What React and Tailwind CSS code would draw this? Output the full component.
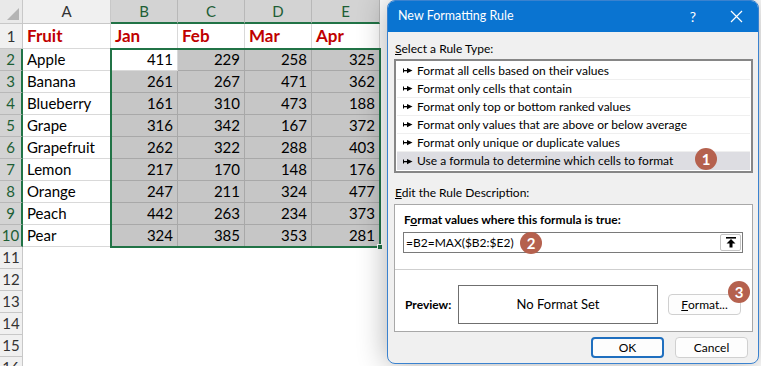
import React from 'react';

const rows = [
    ['Apple', 411, 229, 258, 325],
    ['Banana', 261, 267, 471, 362],
    ['Blueberry', 161, 310, 473, 188],
    ['Grape', 316, 342, 167, 372],
    ['Grapefruit', 262, 322, 288, 403],
    ['Lemon', 217, 170, 148, 176],
    ['Orange', 247, 211, 324, 477],
    ['Peach', 442, 263, 234, 373],
    ['Pear', 324, 385, 353, 281],
];

const ruleTypes = [
    'Format all cells based on their values',
    'Format only cells that contain',
    'Format only top or bottom ranked values',
    'Format only values that are above or below average',
    'Format only unique or duplicate values',
    'Use a formula to determine which cells to format',
];

const sheetFont = { fontFamily: 'Lato, "Liberation Sans", sans-serif' };
const dlgFont = { fontFamily: 'Lato, "Noto Sans", sans-serif' };

// little arrow used in front of each rule type
const RuleArrow = () => (
    <svg width="10" height="9" viewBox="0 0 10 9" className="shrink-0">
        <rect x="0" y="2.5" width="1" height="4" fill="#000" />
        <rect x="0" y="4" width="5" height="1.3" fill="#000" />
        <path d="M4 2 L9.5 4.6 L4 7.2 Z" fill="#000" />
    </svg>
);

const Badge = ({ n, className }) => (
    <div className={`absolute w-[22px] h-[22px] rounded-full bg-[#b5614e] text-white font-bold text-[15px] leading-none flex items-center justify-center ${className}`}>
        {n}
    </div>
);

const Sheet = () => (
    <div className="absolute inset-0" style={sheetFont}>
        <div className="grid grid-cols-[23px_88px_67px_67px_67px_68px_1fr] text-[15px] text-black">
            {/* column headers */}
            <div className="h-[24px] bg-[#e9e9e9] border-r border-b border-[#c8c8c8] relative">
                <div className="absolute right-[3px] bottom-[3px] w-0 h-0 border-l-[12px] border-l-transparent border-b-[12px] border-b-[#b4b4b4]" />
            </div>
            <div className="h-[24px] bg-[#f0f0f0] border-r border-b border-[#c8c8c8] flex items-center justify-center text-[#333]">A</div>
            {['B', 'C', 'D', 'E'].map((c) => (
                <div key={c} className="h-[24px] bg-[#d3d3d3] border-r border-[#b8b8b8] border-b-2 border-b-[#217346] flex items-center justify-center text-[#1d5e35]">{c}</div>
            ))}
            <div className="h-[24px] bg-white" />

            {/* row 1 */}
            <div className="h-[25px] bg-[#f0f0f0] border-r border-b border-[#c8c8c8] flex items-center justify-center text-[#333]">1</div>
            {['Fruit', 'Jan', 'Feb', 'Mar', 'Apr'].map((h) => (
                <div key={h} className="h-[25px] border-b border-r border-[#d9d9d9] bg-white flex items-center pl-[4px] font-bold text-[17px] text-[#c00000]">{h}</div>
            ))}
            <div className="h-[25px] bg-white" />

            {/* rows 2-10 */}
            {rows.map((r, ri) => (
                <React.Fragment key={r[0]}>
                    <div className="h-[22px] bg-[#d3d3d3] border-b border-[#b8b8b8] border-r-2 border-r-[#217346] flex items-center justify-center text-[#1d5e35]">{ri + 2}</div>
                    <div className="h-[22px] bg-white border-b border-r border-[#d9d9d9] flex items-center pl-[4px]">{r[0]}</div>
                    {r.slice(1).map((v, ci) => (
                        <div
                            key={ci}
                            className={`h-[22px] border-b border-r flex items-center justify-end pr-[4px] ${ri === 0 && ci === 0 ? 'bg-white border-[#d9d9d9]' : 'bg-[#c6c6c6] border-[#a8a8a8]'}`}
                        >
                            {v}
                        </div>
                    ))}
                    <div className="h-[22px] bg-white" />
                </React.Fragment>
            ))}

            {/* empty rows */}
            {[11, 12, 13, 14, 15, 16].map((n) => (
                <React.Fragment key={n}>
                    <div className="h-[22px] bg-[#f0f0f0] border-r border-b border-[#c8c8c8] flex items-center justify-center text-[#333]">{n}</div>
                    <div className="col-span-6 h-[22px] bg-white" />
                </React.Fragment>
            ))}
        </div>

        {/* selection outline B2:E10 */}
        <div className="absolute left-[110px] top-[48px] w-[271px] h-[200px] border-2 border-[#217346]" />
        <div className="absolute left-[377px] top-[244px] w-[6px] h-[6px] bg-[#217346] border border-white" />
    </div>
);

const Dialog = () => (
    <div
        className="absolute left-[387px] top-0 w-[372px] h-[364px] bg-[#f0f0f0] border border-[#3a82cf] rounded-[8px] overflow-hidden shadow-[0_0_30px_rgba(0,0,0,0.32)] text-[12px] text-black"
        style={dlgFont}
    >
        {/* title bar */}
        <div className="h-[31px] bg-[#0a74d1] flex items-center pl-[10px] pr-[15px] text-white">
            <span className="text-[12.5px] flex-1">New Formatting Rule</span>
            <span className="text-[14px] mr-[34px]">?</span>
            <svg width="13" height="13" viewBox="0 0 13 13">
                <path d="M1 1 L12 12 M12 1 L1 12" stroke="#fff" strokeWidth="1.2" />
            </svg>
        </div>

        <div className="pl-[6px] pr-[5px] flex flex-col">
            <div className="mt-[9px] h-[16px] leading-[16px] pl-[1px]">
                <span className="underline">S</span>elect a Rule Type:
            </div>

            <div className="mt-[2px] border-2 border-[#868686] bg-white py-[1px] px-[1px]">
                {ruleTypes.map((t, i) => (
                    <div
                        key={t}
                        className={`h-[18px] flex items-center gap-[4px] pl-[6px] ${i === 5 ? 'bg-[#dddde2]' : 'border-b border-[#efefef]'}`}
                    >
                        <RuleArrow />
                        <span>{t}</span>
                    </div>
                ))}
            </div>

            <div className="mt-[12px] h-[16px] leading-[16px] pl-[1px]">
                <span className="underline">E</span>dit the Rule Description:
            </div>

            <div className="mt-[3px] h-[128px] border border-[#a8a8a8] bg-white flex flex-col">
                <div className="pl-[8px] pr-[9px] pb-[16px] border-b border-[#cfcfcf]">
                    <div className="mt-[7px] h-[16px] leading-[16px] font-bold pl-[1px]">
                        F<span className="underline">o</span>rmat values where this formula is true:
                    </div>
                    <div className="mt-[4px] h-[21px] border border-[#7a7a7a] flex items-center pl-[2px] pr-[1px]">
                        <span className="flex-1">=B2=MAX($B2:$E2)</span>
                        <div className="w-[21px] h-[17px] border border-[#c4c4c4] rounded-[2px] bg-white flex items-center justify-center">
                            <svg width="10" height="11" viewBox="0 0 10 11">
                                <rect x="0" y="0" width="10" height="1.6" fill="#000" />
                                <path d="M5 2 L9.5 6.5 L6.5 6.5 L6.5 10.5 L3.5 10.5 L3.5 6.5 L0.5 6.5 Z" fill="#000" />
                            </svg>
                        </div>
                    </div>
                </div>
                <div className="flex items-center pl-[10px] mt-[15px]">
                    <span className="font-bold w-[53px]">Preview:</span>
                    <div className="w-[200px] h-[39px] border border-[#6f6f6f] flex items-center justify-center text-[13px]">
                        No Format Set
                    </div>
                    <div className="ml-[10px] w-[73px] h-[21px] border border-[#d0d0d0] rounded-[4px] bg-[#fdfdfd] flex items-center justify-center">
                        <span className="underline">F</span>ormat...
                    </div>
                </div>
            </div>

            <div className="mt-[5px] flex justify-end gap-[11px] pr-[5px]">
                <div className="w-[73px] h-[21px] border-2 border-[#1f6fbf] rounded-[4px] bg-[#fdfdfd] flex items-center justify-center">OK</div>
                <div className="w-[73px] h-[21px] border border-[#d0d0d0] rounded-[4px] bg-[#fdfdfd] flex items-center justify-center">Cancel</div>
            </div>
        </div>

        <Badge n="1" className="left-[307px] top-[147px]" />
        <Badge n="2" className="left-[132px] top-[231px]" />
        <Badge n="3" className="left-[340px] top-[280px]" />
    </div>
);

export default function App() {
    return (
        <div className="relative w-[761px] h-[366px] overflow-hidden bg-white">
            <Sheet />
            <Dialog />
        </div>
    );
}
